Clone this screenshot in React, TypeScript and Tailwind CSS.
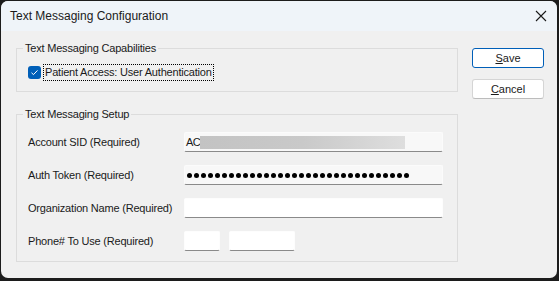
import React from "react";

const font = { fontFamily: '"Liberation Sans", Arial, sans-serif' };

function Field({
  label,
  children,
}: {
  label: string;
  children: React.ReactNode;
}) {
  return (
    <div className="flex items-center h-5">
      <span className="w-[156px] shrink-0 text-[11px] tracking-[-0.2px] text-[#1a1a1a]">{label}</span>
      {children}
    </div>
  );
}

function Box({
  className = "",
  readOnly = false,
  children,
}: {
  className?: string;
  readOnly?: boolean;
  children?: React.ReactNode;
}) {
  return (
    <div
      className={`h-5 flex items-center border border-b-[#8a8a8a] rounded-[2px] ${
        readOnly ? "bg-[#f8f8f8] border-[#fbfbfb]" : "bg-white border-[#fdfdfd]"
      } ${className}`}
    >
      {children}
    </div>
  );
}

export default function App() {
  return (
    <div className="w-[559px] h-[281px] bg-[#1c1c1c] pt-px pl-px" style={font}>
      <div className="w-[556px] h-[277px] rounded-[7px] overflow-hidden bg-[#f0f0f0] flex flex-col">
        {/* title bar */}
        <div className="h-[30px] bg-[#eff4f9] flex items-center justify-between pl-[9px] pr-[9px]">
          <span className="text-[12px] text-[#1a1a1a]">Text Messaging Configuration</span>
          <svg width="12" height="12" viewBox="0 0 12 12" className="mr-[1px]">
            <path d="M1 1 L11 11 M11 1 L1 11" stroke="#1a1a1a" strokeWidth="1.1" />
          </svg>
        </div>

        <div className="flex pl-[15px] pt-[10px]">
          <div className="w-[442px] flex flex-col">
            <fieldset className="border border-[#dcdcdc] pl-[11px] pr-[14px] pt-[9px] pb-[10px]">
              <legend className="-ml-[5px] px-[2px] text-[11px] tracking-[-0.2px] leading-[14px] text-[#1a1a1a]">
                Text Messaging Capabilities
              </legend>
              <div className="flex items-center h-[17px]">
                <span className="w-[13px] h-[13px] rounded-[3px] bg-[#005fb8] flex items-center justify-center">
                  <svg width="9" height="9" viewBox="0 0 9 9">
                    <path d="M1.5 4.8 L3.5 6.6 L7.5 2.4" fill="none" stroke="#fff" strokeWidth="1" />
                  </svg>
                </span>
                <span className="ml-[2px] h-[17px] px-[1px] flex items-center border border-dotted border-black text-[11px] tracking-[-0.2px] text-[#1a1a1a]">
                  Patient Access: User Authentication
                </span>
              </div>
            </fieldset>

            <fieldset className="mt-[15px] border border-[#dcdcdc] pl-[11px] pr-[14px] pt-[11px] pb-[10px]">
              <legend className="-ml-[5px] px-[2px] text-[11px] tracking-[-0.2px] leading-[14px] text-[#1a1a1a]">
                Text Messaging Setup
              </legend>
              <div className="flex flex-col gap-[13px]">
                <Field label="Account SID (Required)">
                  <Box readOnly className="w-[259px] pl-[1px]">
                    <span className="text-[11px] text-[#1a1a1a] tracking-[-0.5px]">AC</span>
                    <span className="h-[13px] w-[205px] bg-gradient-to-r from-[#c3c3c3] via-[#c9c9c9] to-[#dedede]" />
                  </Box>
                </Field>
                <Field label="Auth Token (Required)">
                  <Box readOnly className="w-[259px] pl-[2px] gap-[2px]">
                    {Array.from({ length: 32 }).map((_, i) => (
                      <span key={i} className="w-[5px] h-[5px] rounded-full bg-black" />
                    ))}
                  </Box>
                </Field>
                <Field label="Organization Name (Required)">
                  <Box className="w-[259px]" />
                </Field>
                <Field label="Phone# To Use (Required)">
                  <div className="flex gap-[9px]">
                    <Box className="w-[36px]" />
                    <Box className="w-[66px]" />
                  </div>
                </Field>
              </div>
            </fieldset>
          </div>

          <div className="ml-[14px] pt-[7px] flex flex-col gap-[11px]">
            <button className="w-[72px] h-[20px] rounded-[3px] border border-[#005fb8] bg-white text-[11px] text-[#1a1a1a] leading-none">
              <span className="underline underline-offset-[1px]">S</span>ave
            </button>
            <button className="w-[72px] h-[20px] rounded-[3px] border border-[#d5d5d5] border-b-[#bcbcbc] bg-white text-[11px] text-[#1a1a1a] leading-none">
              <span className="underline underline-offset-[1px]">C</span>ancel
            </button>
          </div>
        </div>
      </div>
    </div>
  );
}
